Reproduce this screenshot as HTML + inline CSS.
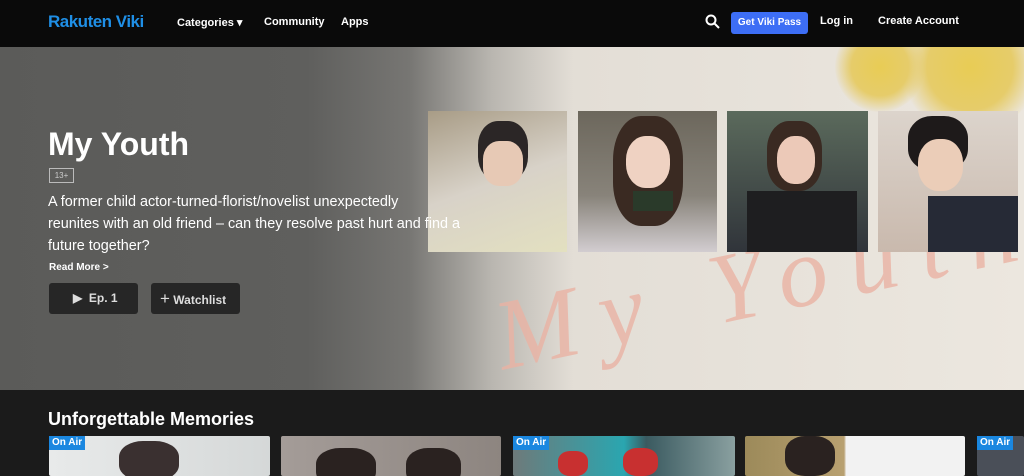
<!DOCTYPE html>
<html><head><meta charset="utf-8"><style>
*{margin:0;padding:0;box-sizing:border-box}
body{width:1024px;height:475px;overflow:hidden;background:#1b1b1b;font-family:"Liberation Sans",sans-serif;position:relative}
.nav{position:absolute;left:0;top:0;width:1024px;height:47px;background:#0a0a0a}
.nav span{position:absolute;color:#fff;font-weight:bold;font-size:11px;top:16px}
.logo{position:absolute;left:48px;top:12px;color:#1f8fe6;font-size:17px;font-weight:bold;letter-spacing:-0.5px}
.hero{position:absolute;left:0;top:47px;width:1024px;height:343px;background:linear-gradient(90deg,#5b5b59 0%,#5f5f5d 30%,#777673 40%,#b9b6b0 48%,#e3ded6 56%,#ece7df 100%);overflow:hidden}
.fl{position:absolute;border-radius:50%;background:radial-gradient(circle,#e8cc55 0%,#e6cc6a 45%,rgba(236,220,150,0) 72%)}
.ph{position:absolute;top:111px;height:141px;overflow:hidden}
.script{position:absolute;left:490px;top:175px;color:#eab3a4;font-family:"Liberation Serif",serif;font-style:italic;font-size:100px;transform:rotate(-12deg);letter-spacing:22px;opacity:.8;white-space:nowrap;font-weight:normal}
h1{position:absolute;left:48px;top:126px;color:#fff;font-size:32px;font-weight:bold}
.rate{position:absolute;left:49px;top:168px;width:25px;height:15px;border:1px solid #bbb;color:#ccc;font-size:8px;text-align:center;line-height:13px}
.desc{position:absolute;left:48px;top:191px;color:#fff;font-size:14.4px;line-height:22px;white-space:nowrap}
.rm{position:absolute;left:49px;top:262px;color:#fff;font-size:10px;font-weight:bold}
.btn{position:absolute;top:283px;height:31px;background:#262626;border-radius:3px;color:#ddd;font-size:12px;font-weight:bold;line-height:31px}
h2{position:absolute;left:48px;top:409px;color:#fff;font-size:18px;font-weight:bold}
.card{position:absolute;top:436px;height:40px;border-radius:2px;overflow:hidden}
.oa{position:absolute;top:436px;background:#1a87e0;color:#fff;font-size:10px;font-weight:bold;padding:1px 3px;height:14px}
</style></head><body>
<div class="nav">
<div class="logo">Rakuten Viki</div>
<span style="left:177px">Categories ▾</span>
<span style="left:264px">Community</span>
<span style="left:341px">Apps</span>
<svg style="position:absolute;left:705px;top:14px" width="15" height="15" viewBox="0 0 15 15"><circle cx="6" cy="6" r="4.5" fill="none" stroke="#fff" stroke-width="2"/><path d="M9.5 9.5L14 14" stroke="#fff" stroke-width="2"/></svg>
<div style="position:absolute;left:731px;top:12px;width:77px;height:22px;background:#3d6ef5;border-radius:3px;color:#fff;font-size:10px;font-weight:bold;text-align:center;line-height:22px">Get Viki Pass</div>
<span style="left:820px;top:15px">Log in</span>
<span style="left:878px;top:15px">Create Account</span>
</div>
<div class="hero">
<div class="fl" style="left:835px;top:-25px;width:90px;height:90px"></div>
<div class="fl" style="left:900px;top:-45px;width:140px;height:130px"></div>
<div class="script">My Youth</div>
</div>
<div class="ph" style="left:428px;width:139px;background:linear-gradient(160deg,#a89c86,#d8d2c8 50%,#e3e0c0)"><div style="position:absolute;left:50px;top:10px;width:50px;height:60px;border-radius:40%;background:#2b2626"></div><div style="position:absolute;left:55px;top:30px;width:40px;height:45px;border-radius:40%;background:#e7c9b5"></div></div>
<div class="ph" style="left:578px;width:139px;background:linear-gradient(180deg,#6c675c,#88837a 60%,#d2cdd0)"><div style="position:absolute;left:35px;top:5px;width:70px;height:110px;border-radius:40%;background:#3a2a22"></div><div style="position:absolute;left:48px;top:25px;width:44px;height:52px;border-radius:45%;background:#efd2c2"></div><div style="position:absolute;left:55px;top:80px;width:40px;height:20px;background:#2a3a2a"></div></div>
<div class="ph" style="left:727px;width:141px;background:linear-gradient(180deg,#5b6a5c,#30343a)"><div style="position:absolute;left:40px;top:10px;width:55px;height:70px;border-radius:40%;background:#3a2a22"></div><div style="position:absolute;left:50px;top:25px;width:38px;height:48px;border-radius:45%;background:#ecc9b8"></div><div style="position:absolute;left:20px;top:80px;width:110px;height:61px;background:#1e1e20"></div></div>
<div class="ph" style="left:878px;width:140px;background:linear-gradient(180deg,#dcd4cc,#c9b9ad)"><div style="position:absolute;left:30px;top:5px;width:60px;height:55px;border-radius:40%;background:#1e1a1a"></div><div style="position:absolute;left:40px;top:28px;width:45px;height:52px;border-radius:45%;background:#ebcdb8"></div><div style="position:absolute;left:50px;top:85px;width:90px;height:56px;background:#262a36"></div></div>
<h1>My Youth</h1>
<div class="rate">13+</div>
<div class="desc">A former child actor-turned-florist/novelist unexpectedly<br>reunites with an old friend – can they resolve past hurt and find a<br>future together?</div>
<div class="rm">Read More &gt;</div>
<div class="btn" style="left:49px;width:89px;padding-left:24px">▶&nbsp; Ep. 1</div>
<div class="btn" style="left:151px;width:89px;padding-left:9px"><span style="font-size:17px;font-weight:normal">+</span> Watchlist</div>
<h2>Unforgettable Memories</h2>
<div class="card" style="left:49px;width:221px;background:linear-gradient(90deg,#e8eaea,#d5d8d8)"><div style="position:absolute;left:70px;top:5px;width:60px;height:40px;border-radius:40%;background:#3a3030"></div></div>
<div class="card" style="left:281px;width:220px;background:linear-gradient(90deg,#a49c98,#8d8580)"><div style="position:absolute;left:35px;top:12px;width:60px;height:40px;border-radius:40%;background:#2a2220"></div><div style="position:absolute;left:125px;top:12px;width:55px;height:40px;border-radius:40%;background:#2a2220"></div></div>
<div class="card" style="left:513px;width:222px;background:linear-gradient(90deg,#6e7a7a,#2aa6b0 50%,#3a5a60 60%,#8aa0a0)"><div style="position:absolute;left:45px;top:15px;width:30px;height:25px;border-radius:40%;background:#c83030"></div><div style="position:absolute;left:110px;top:12px;width:35px;height:28px;border-radius:40%;background:#c83030"></div></div>
<div class="card" style="left:745px;width:220px;background:linear-gradient(90deg,#9c8a5a,#b8a070 45%,#f2f2f2 46%)"><div style="position:absolute;left:40px;top:0;width:50px;height:40px;border-radius:40%;background:#2a2220"></div></div>
<div class="card" style="left:977px;width:47px;background:#4a4f58"></div>
<div class="oa" style="left:49px">On Air</div>
<div class="oa" style="left:513px">On Air</div>
<div class="oa" style="left:977px">On Air</div>
</body></html>
